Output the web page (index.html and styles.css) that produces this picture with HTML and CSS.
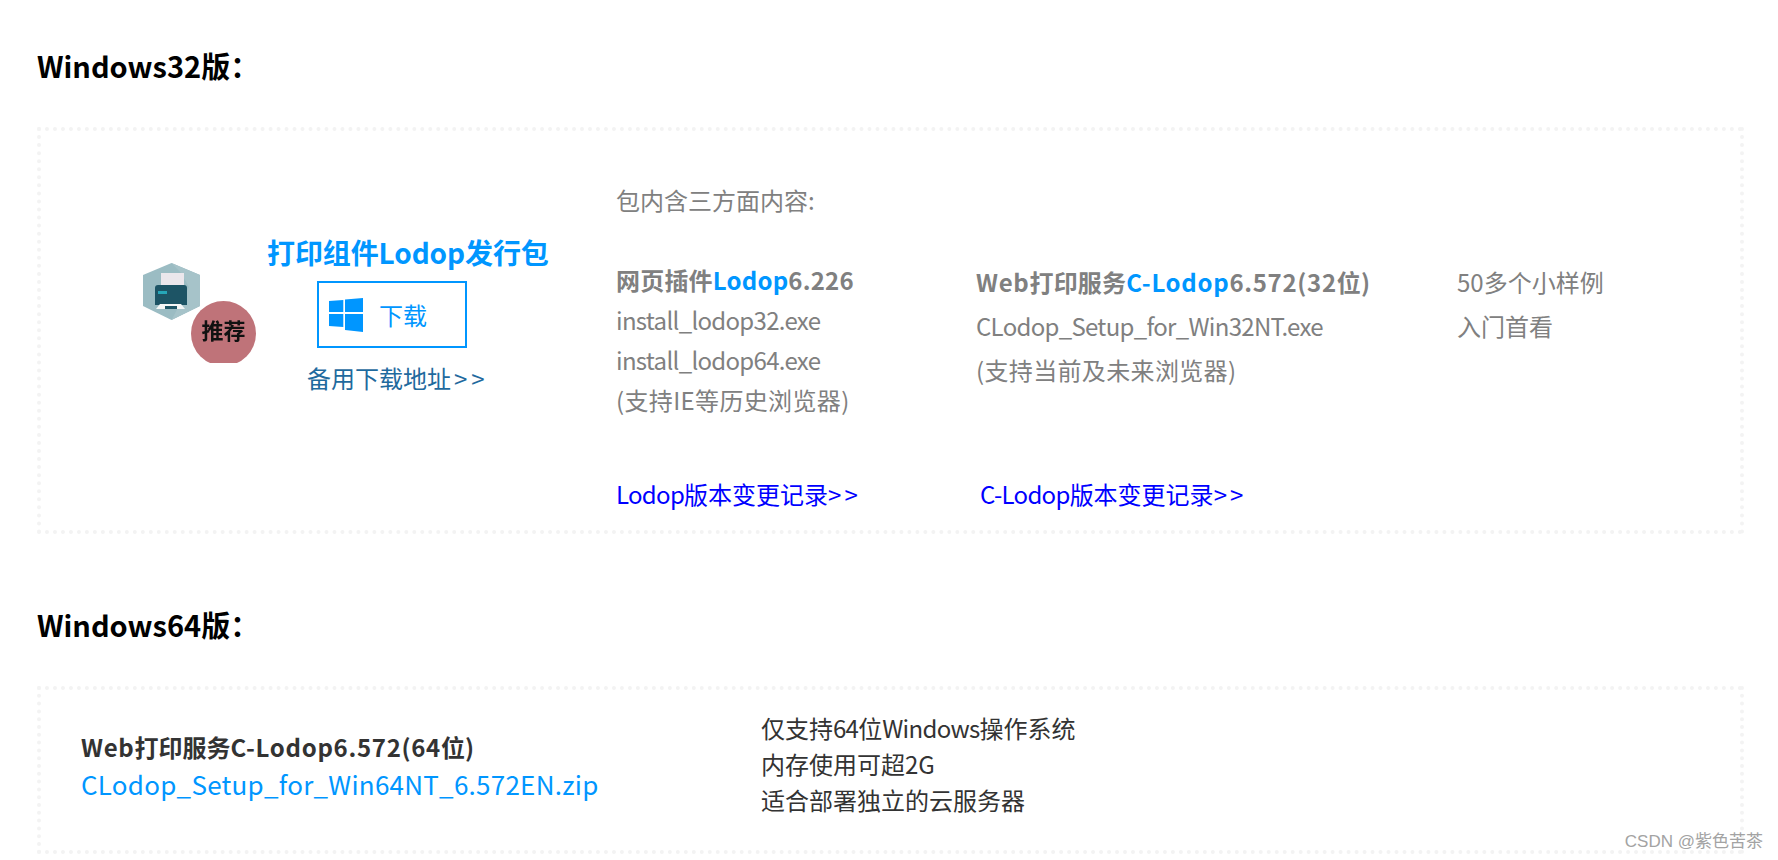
FILE: index.html
```html
<!DOCTYPE html>
<html lang="zh-CN">
<head>
<meta charset="utf-8">
<title>Lodop</title>
<link rel="stylesheet" href="styles.css">
</head>
<body>
<main class="page">
  <h2 class="heading">Windows32版：</h2>
  <section class="box box-32">
    <div class="promo">
      <div class="promo-icon">
        <svg class="hex" width="58" height="57" viewBox="0 0 58 57">
          <polygon points="28.500,0 57,12 57,43 28.500,57 0,43 0,12" fill="#9bbcc3"/>
          <polygon points="28.500,0 57,12 57,43 28.500,57 46,24 38,10" fill="#a6c3c9"/>
          <rect x="18" y="10" width="23" height="13" fill="#ebe7ec"/>
          <path d="M15 22h26a3 3 0 0 1 3 3v17H12V25a3 3 0 0 1 3-3z" fill="#1d5465"/>
          <rect x="15" y="28" width="9" height="3" fill="#26a6b8"/>
          <path d="M17 41l-4 5h29l-4-5z" fill="#f4f6f6"/>
          <rect x="22" y="43" width="12" height="3" fill="#1d5465"/>
        </svg>
        <span class="badge">推荐</span>
      </div>
      <div class="promo-main">
        <div class="promo-title">打印组件Lodop发行包</div>
        <a class="btn" href="#">
          <svg class="win" width="34" height="34" viewBox="0 0 34 34">
            <path d="M0 3 14.300 2V14H0zM16 1.500 34 0V14H16zM0 16H14.300V29L0 28zM16 16H34V34L16 32z" fill="#0096ff"/>
          </svg>
          <span>下载</span>
        </a>
        <a class="alt-link" href="#">备用下载地址<span class="gt gt-alt">&gt;&gt;</span></a>
      </div>
    </div>
    <div class="details">
      <p class="intro">包内含三方面内容:</p>
      <div class="cols">
        <div class="col col-a">
          <div class="strong">网页插件<span class="blue">Lodop</span>6.226</div>
          <div class="n">install_lodop32.exe</div>
          <div class="n">install_lodop64.exe</div>
          <div class="paren">(支持IE等历史浏览器)</div>
        </div>
        <div class="col col-b">
          <div class="strong"><span class="w">Web</span>打印服务<span class="blue w">C-Lodop</span><span class="w">6.572(32</span>位)</div>
          <div class="n">CLodop_Setup_for_Win32NT.exe</div>
          <div class="paren">(支持当前及未来浏览器)</div>
        </div>
        <div class="col col-c">
          <div>50多个小样例</div>
          <div>入门首看</div>
        </div>
      </div>
      <div class="changes">
        <a class="change-a" href="#"><span class="n">Lodop</span>版本变更记录<span class="gt">&gt;&gt;</span></a>
        <a class="change-b" href="#"><span class="n">C-Lodop</span>版本变更记录<span class="gt">&gt;&gt;</span></a>
      </div>
    </div>
  </section>
  <h2 class="heading heading-64">Windows64版：</h2>
  <section class="box box-64">
    <div class="pkg">
      <div class="pkg-name"><span class="w">Web</span>打印服务<span class="w">C-Lodop6.572(64</span>位)</div>
      <a class="pkg-link" href="#">CLodop_Setup_for_Win64NT_6.572EN.zip</a>
    </div>
    <div class="notes">
      <div>仅支持<span class="n">64</span>位<span class="n">Windows</span>操作系统</div>
      <div>内存使用可超2G</div>
      <div>适合部署独立的云服务器</div>
    </div>
  </section>
  <div class="watermark">CSDN @紫色苦茶</div>
</main>
</body>
</html>
```
FILE: styles.css
```css
* { box-sizing: border-box; }
html, body { margin: 0; padding: 0; background: #fff; }
body {
  font-family: "Noto Sans CJK SC", "Noto Sans", sans-serif;
  font-size: 24px;
  color: #333;
  overflow: hidden;
}
a { text-decoration: none; white-space: nowrap; }
.page {
  position: relative;
  height: 860px;
  padding: 45px 34px 0 37px;
}
.heading {
  margin: 0 0 42px;
  font-size: 29px;
  line-height: 40px;
  font-weight: 700;
  color: #000;
}
.heading-64 { margin: 70px 0 42px; }
.box { border: 4px dotted #f3f3f3; }
.box-32 { display: flex; height: 407px; }
.promo {
  display: flex;
  width: 575px;
  padding: 101px 0 0 102px;
  gap: 11px;
}
.promo-icon {
  position: relative;
  flex: none;
  width: 113px;
  height: 98px;
  margin-top: 31px;
}
.hex { display: block; filter: blur(.4px); }
.badge {
  position: absolute;
  left: 48px;
  top: 38px;
  width: 65px;
  height: 65px;
  border-radius: 50%;
  clip-path: inset(0 0 3px 0);
  background: #bf7379;
  color: #111;
  font-size: 22px;
  font-weight: 700;
  line-height: 56px;
  text-align: center;
  filter: blur(.5px);
}
.promo-main { display: flex; flex-direction: column; align-items: flex-start; }
.promo-title {
  font-size: 28px;
  line-height: 40px;
  font-weight: 700;
  letter-spacing: -.1px;
  color: #0096ff;
}
.btn {
  display: flex;
  align-items: center;
  gap: 16px;
  width: 150px;
  height: 67px;
  margin: 9px 0 0 50px;
  padding: 0 0 0 10px;
  border: 2px solid #0096ff;
  color: #0096ff;
}
.win { flex: none; }
.alt-link {
  margin: 14px 0 0 40px;
  line-height: 32px;
  color: #1f6a9e;
}
.gt { letter-spacing: 3px; margin-right: -3px; }
.gt-alt { margin-left: 3px; letter-spacing: 4px; margin-right: -4px; }
.n { letter-spacing: -.7px; }
.w { letter-spacing: .7px; }
.paren { letter-spacing: .35px; }
.details { flex: 1; padding-top: 49px; color: #808080; }
.intro { margin: 0 0 40px; line-height: 40px; }
.cols { display: flex; height: 160px; }
.col > div { line-height: 40px; }
.col-a { width: 360px; }
.col-b { width: 481px; }
.col-b > div, .col-c > div { line-height: 44px; }
.strong { font-weight: 700; letter-spacing: .2px; }
.blue { color: #0096ff; }
.changes { display: flex; margin-top: 54px; line-height: 40px; }
.changes a { color: #00f; }
.change-a { width: 364px; }
.box-64 {
  display: flex;
  height: 168px;
  padding: 20px 0 0 40px;
  color: #333;
}
.pkg { width: 680px; padding-top: 18px; }
.pkg-name { font-weight: 700; line-height: 37px; }
.pkg-link { display: block; font-size: 26px; line-height: 37px; color: #0096ff; letter-spacing: .25px; }
.notes { line-height: 36px; }
.watermark {
  position: absolute;
  right: 15px;
  top: 830px;
  font-family: "Liberation Sans", "Noto Sans CJK SC", sans-serif;
  font-size: 17px;
  line-height: 24px;
  color: #a3a3a3;
}
```
